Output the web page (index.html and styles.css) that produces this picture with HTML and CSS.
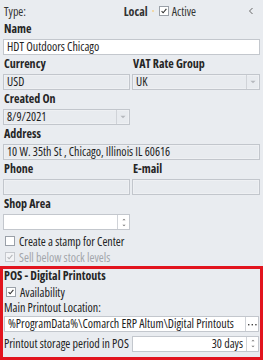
FILE: index.html
```html
<!DOCTYPE html>
<html>
<head>
<meta charset="utf-8">
<link rel="stylesheet" href="styles.css">
</head>
<body>
<div class="form">
  <div class="top">
    <span class="type">Type:</span>
    <span class="grow"></span>
    <span class="local">Local</span>
    <span class="dot"></span>
    <span class="cb checked"><svg viewBox="0 0 11 11"><path d="M2.2 5.6 L4.3 7.9 L8.8 2.6" /></svg></span>
    <span class="active">Active</span>
    <span class="grow2"></span>
    <span class="chev"><svg viewBox="0 0 6 8"><path d="M4.5 1 L1.5 4 L4.5 7" /></svg></span>
  </div>

  <div class="lbl">Name</div>
  <div class="inp white">HDT Outdoors Chicago</div>

  <div class="two">
    <div>
      <div class="lbl">Currency</div>
      <div class="inp dis">USD</div>
    </div>
    <div>
      <div class="lbl">VAT Rate Group</div>
      <div class="inp dis combo"><span class="val">UK</span><span class="btn"><svg viewBox="0 0 7 4"><path d="M0.5 0.5 L3.5 3.5 L6.5 0.5 Z"/></svg></span></div>
    </div>
  </div>

  <div class="two">
    <div>
      <div class="lbl">Created On</div>
      <div class="inp dis combo"><span class="val">8/9/2021</span><span class="btn"><svg viewBox="0 0 7 4"><path d="M0.5 0.5 L3.5 3.5 L6.5 0.5 Z"/></svg></span></div>
    </div>
    <div></div>
  </div>

  <div class="lbl">Address</div>
  <div class="inp dis">10 W. 35th St , Chicago, Illinois IL 60616</div>

  <div class="two">
    <div>
      <div class="lbl">Phone</div>
      <div class="inp dis"></div>
    </div>
    <div>
      <div class="lbl">E-mail</div>
      <div class="inp dis"></div>
    </div>
  </div>

  <div class="two">
    <div>
      <div class="lbl">Shop Area</div>
      <div class="inp white combo"><span class="val"></span><span class="spin"><svg viewBox="0 0 5 3"><path d="M0.5 2.5 L2.5 0.5 L4.5 2.5 Z"/></svg><svg viewBox="0 0 5 3"><path d="M0.5 0.5 L2.5 2.5 L4.5 0.5 Z"/></svg></span></div>
    </div>
    <div></div>
  </div>

  <div class="chk first"><span class="cb"></span><span>Create a stamp for Center</span></div>
  <div class="chk disabled"><span class="cb checked"><svg viewBox="0 0 11 11"><path d="M2.2 5.6 L4.3 7.9 L8.8 2.6" /></svg></span><span>Sell below stock levels</span></div>
</div>

<div class="pos">
  <div class="lbl pos-title">POS - Digital Printouts</div>
  <div class="chk avail"><span class="cb checked"><svg viewBox="0 0 11 11"><path d="M2.2 5.6 L4.3 7.9 L8.8 2.6" /></svg></span><span>Availability</span></div>
  <div class="plain">Main Printout Location:</div>
  <div class="inp white combo path"><span class="val">%ProgramData%\Comarch ERP Altum\Digital Printouts</span><span class="dots"><svg viewBox="0 0 9 2"><rect x="0" y="0" width="1.4" height="1.4"/><rect x="3.6" y="0" width="1.4" height="1.4"/><rect x="7.2" y="0" width="1.4" height="1.4"/></svg></span></div>
  <div class="storage">
    <span class="st-lbl">Printout storage period in POS</span>
    <div class="inp white combo days"><span class="val right">30 days</span><span class="spin"><svg viewBox="0 0 5 3"><path d="M0.5 2.5 L2.5 0.5 L4.5 2.5 Z"/></svg><svg viewBox="0 0 5 3"><path d="M0.5 0.5 L2.5 2.5 L4.5 0.5 Z"/></svg></span></div>
  </div>
</div>
</body>
</html>
```

FILE: styles.css
```css
* { box-sizing: border-box; }
html, body { margin: 0; padding: 0; }
body {
  width: 263px;
  height: 360px;
  overflow: hidden;
  background: #e9ecf0;
  font-family: "Open Sans", "Noto Sans", sans-serif;
  font-stretch: 75%;
  font-size: 12px;
  color: #1e1e1e;
}
.form { padding: 0 3px; }

.top {
  display: flex;
  align-items: center;
  height: 22px;
  padding-left: 1px;
}
.type { color: #333; }
.grow { flex: 1; }
.local { font-weight: bold; color: #333; }
.dot { width: 2px; height: 2px; background: #f2d9a8; margin: 0 3px 0 4px; }
.active { margin-left: 3px; color: #333; }
.grow2 { width: 52px; }
.chev { width: 6px; height: 8px; display: flex; margin-right: 6px; }
.chev svg { width: 6px; height: 8px; fill: none; stroke: #666; stroke-width: 1; }

.lbl {
  font-weight: bold;
  height: 14px;
  line-height: 14px;
  padding-left: 1px;
  margin-bottom: 3px;
  color: #262626;
}
.inp {
  height: 16px;
  border: 1px solid #c2c6cc;
  line-height: 14px;
  padding-left: 3px;
  margin-bottom: 2px;
  white-space: nowrap;
  color: #1e1e1e;
}
.white { background: #fff; border-color: #c3c7cd; }
.dis { background: #e8ebef; box-shadow: inset 0 0 0 1px #eef0f3; }

.two {
  display: grid;
  grid-template-columns: 127px 128px;
  column-gap: 2px;
}

.combo { display: flex; padding-right: 0; }
.combo .val { flex: 1; min-width: 0; }
.combo .btn {
  width: 13px;
  border-left: 1px solid #d0d3d8;
  display: flex;
  align-items: center;
  justify-content: center;
}
.combo .btn svg { width: 6px; height: 4px; fill: #b5b8bd; }
.spin {
  width: 12px;
  border-left: 1px solid #d0d3d8;
  display: flex;
  flex-direction: column;
  align-items: center;
  justify-content: center;
  gap: 3px;
}
.spin svg { width: 4px; height: 3px; fill: #777; display: block; }

.chk {
  display: flex;
  align-items: center;
  height: 16px;
  color: #222;
}
.chk.first { margin-top: 1px; }
.chk .cb { margin: 0 4px 0 2px; }
.cb {
  width: 10px;
  height: 10px;
  border: 1px solid #9aa0a8;
  background: #fff;
  display: inline-flex;
  flex: none;
}
.cb svg { width: 8px; height: 8px; fill: none; stroke: #333; stroke-width: 1.5; }
.top .cb { margin-left: 2px; }
.chk.disabled { color: #a3a6ab; }
.chk.disabled .cb { border-color: #c6c9ce; background: #f3f4f6; }
.chk.disabled .cb svg { stroke: #b3b6ba; }

.pos {
  margin-top: 1px;
  border: 3px solid #e2141e;
  height: 94px;
  padding: 0 1px;
}
.pos-title { margin-bottom: 2px; padding-left: 0; }
.chk.avail { height: 14px; margin-bottom: 2px; }
.chk.avail .cb { margin-left: 2px; }
.plain { height: 14px; line-height: 14px; color: #222; margin-bottom: 1px; }
.path { margin-bottom: 3px; }
.dots {
  width: 13px;
  border-left: 1px solid #d0d3d8;
  display: flex;
  align-items: center;
  justify-content: center;
  background: #fff;
}
.dots svg { width: 9px; height: 2px; fill: #444; display: block; margin-top: 2px; }
.storage {
  display: grid;
  grid-template-columns: 128px 1fr;
  align-items: center;
}
.st-lbl { color: #222; white-space: nowrap; }
.days { margin-bottom: 0; }
.right { text-align: right; padding-right: 3px; }
```
